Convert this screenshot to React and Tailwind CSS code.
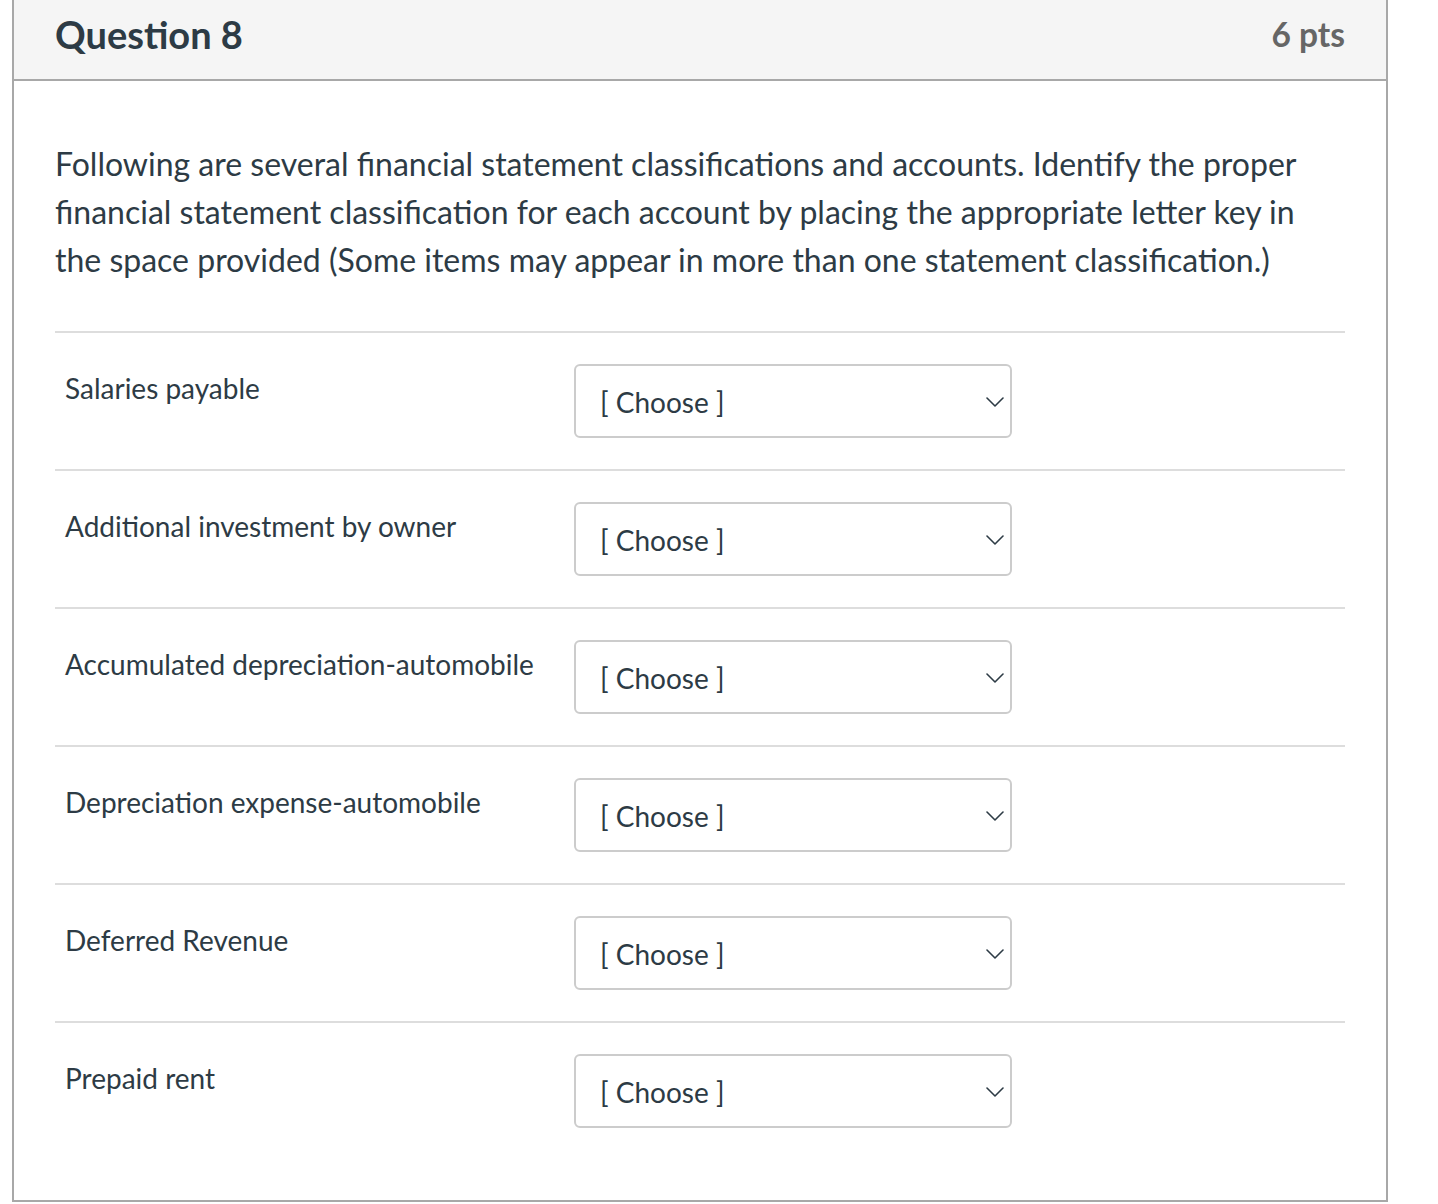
import React from "react";

const rows = [
  "Salaries payable",
  "Additional investment by owner",
  "Accumulated depreciation-automobile",
  "Depreciation expense-automobile",
  "Deferred Revenue",
  "Prepaid rent",
];

const Chevron = () => (
  <svg width="18" height="10" viewBox="0 0 18 10" fill="none">
    <path d="M1 1l8 8 8-8" stroke="#2d3b45" strokeWidth="1.6" strokeLinecap="round" strokeLinejoin="round" />
  </svg>
);

export default function App() {
  return (
    <div className="min-h-[1204px] bg-white" style={{ fontFamily: "Lato, 'Open Sans', sans-serif" }}>
      <div className="ml-[12px] w-[1376px] border-x-2 border-b-2 border-[#a8a8a8]">
        {/* header */}
        <div className="flex h-[81px] items-center justify-between border-b-2 border-[#a8a8a8] bg-[#f5f5f5] px-[41px] pb-[10px]">
          <h2 className="text-[38px] font-bold text-[#2d3b45]">Question 8</h2>
          <span className="text-[33.5px] font-bold text-[#666666]">6 pts</span>
        </div>

        {/* body */}
        <div className="px-[41px] pt-[59px] pb-[41px] text-[#2d3b45]">
          <p className="max-w-[1260px] text-[32px] leading-[48px]">
            Following are several financial statement classifications and accounts. Identify the proper
            financial statement classification for each account by placing the appropriate letter key in
            the space provided (Some items may appear in more than one statement classification.)
          </p>

          <div className="mt-[47px]">
            {rows.map((label) => (
              <div key={label} className="flex border-t-2 border-[#dddddd] pt-[31px] pb-[31px]">
                <div className="w-[519px] shrink-0 pl-[10px] pt-[6px] text-[28px] leading-[36px]">
                  {label}
                </div>
                <div className="flex h-[74px] w-[438px] items-center justify-between rounded-[6px] border-2 border-[#cccccc] pl-[24px] pr-[6px] pt-[2px]">
                  <span className="text-[28px]">[ Choose ]</span>
                  <Chevron />
                </div>
              </div>
            ))}
          </div>
        </div>
      </div>
    </div>
  );
}
